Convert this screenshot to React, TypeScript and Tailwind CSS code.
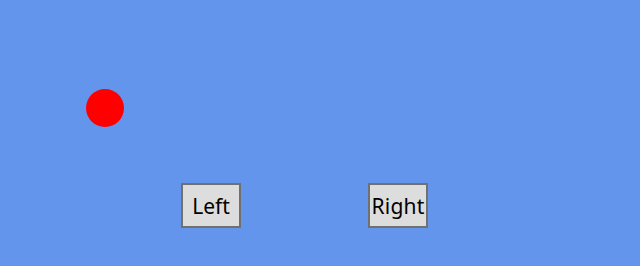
import React from "react";

export default function App() {
  return (
    <div className="relative w-full h-[266px] bg-[#6495ED] overflow-hidden" style={{ fontFamily: '"Noto Sans", "Open Sans", sans-serif' }}>
      <div className="absolute left-[86px] top-[89px] w-[38px] h-[38px] rounded-full bg-[#ff0000]" />
      <div className="flex pt-[183px] pl-[181px] gap-[127px]">
        <button className="w-[60px] h-[45px] pt-[2px] border-2 border-[#707070] bg-[#dddddd] text-[21px] text-black leading-none flex items-center justify-center">Left</button>
        <button className="w-[60px] h-[45px] pt-[2px] border-2 border-[#707070] bg-[#dddddd] text-[21px] text-black leading-none flex items-center justify-center tracking-[0.2px]">Right</button>
      </div>
    </div>
  );
}
